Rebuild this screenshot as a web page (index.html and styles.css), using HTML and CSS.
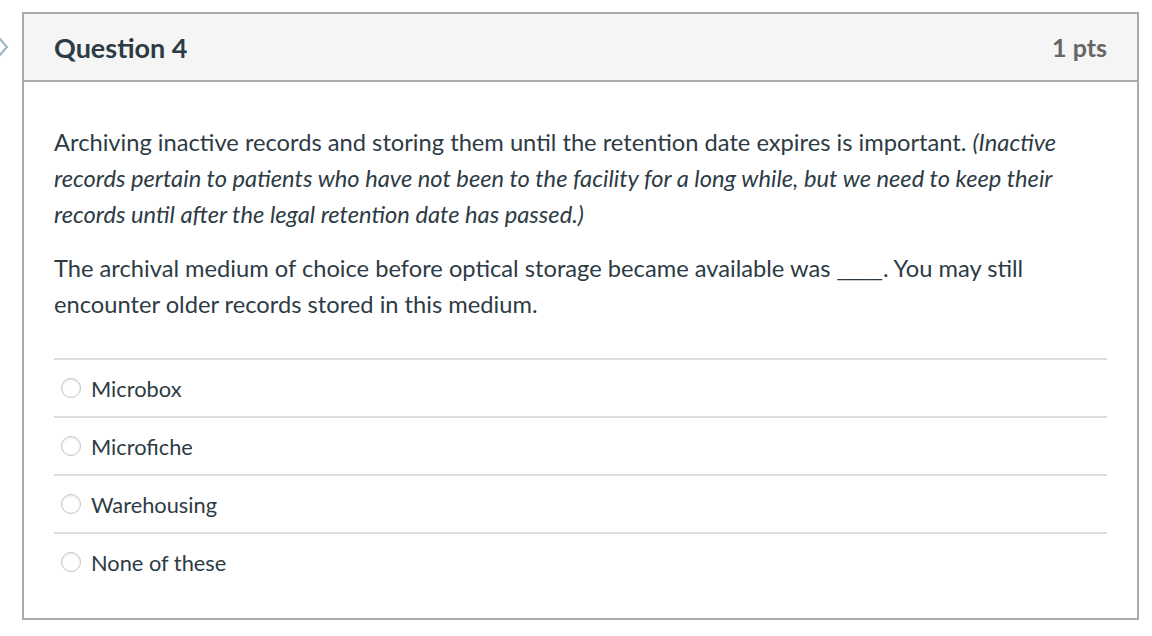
FILE: index.html
```html
<!DOCTYPE html>
<html>
<head>
<meta charset="utf-8">
<link rel="stylesheet" href="styles.css">
</head>
<body>
<div class="page">
  <div class="nav-arrow">
    <svg width="12" height="24" viewBox="0 0 12 24"><path d="M1 3 L9 12 L1 21" fill="none" stroke="#9db3c4" stroke-width="2"/></svg>
  </div>
  <div class="card">
    <div class="header">
      <span class="title">Question 4</span>
      <span class="pts">1 pts</span>
    </div>
    <div class="body">
      <p class="text">Archiving inactive records and storing them until the retention date expires is important. <em>(Inactive records pertain to patients who have not been to the facility for a long while, but we need to keep their records until after the legal retention date has passed.)</em></p>
      <p class="text">The archival medium of choice before optical storage became available was <span class="blank">_____</span>. You may still encounter older records stored in this medium.</p>
      <div class="answers">
        <label class="answer"><span class="radio"></span><span>Microbox</span></label>
        <label class="answer"><span class="radio"></span><span>Microfiche</span></label>
        <label class="answer"><span class="radio"></span><span>Warehousing</span></label>
        <label class="answer"><span class="radio"></span><span>None of these</span></label>
      </div>
    </div>
  </div>
</div>
</body>
</html>
```
FILE: styles.css
```css
html, body { margin: 0; padding: 0; background: #fff; }
body { font-family: Lato, "Liberation Sans", sans-serif; color: #2d3b45; }
.page { position: relative; padding: 12px 0 0 22px; width: 1117px; }
.nav-arrow { position: absolute; left: -2px; top: 35px; }
.card { border: 2px solid #aaaaaa; }
.header { display: flex; justify-content: space-between; align-items: center; background: #f5f5f5; border-bottom: 2px solid #aaaaaa; height: 66px; padding: 0 30px; }
.title { font-size: 27px; font-weight: 700; color: #2d3b45; }
.pts { font-size: 25px; font-weight: 700; color: #666; }
.body { padding: 42px 30px 28px 30px; }
.text { margin: 0 0 18px 0; font-size: 23.7px; line-height: 36px; }
.text em { font-style: italic; }
.blank { letter-spacing: -2px; margin-right: 2px; }
.answers { margin-top: 36px; }
.answer { display: flex; align-items: center; gap: 10px; height: 56px; border-top: 2px solid #dddddd; padding-left: 7px; font-size: 21.8px; }
.radio { width: 20px; height: 20px; border-radius: 50%; border: 1px solid #c4c4c4; box-sizing: border-box; box-shadow: inset 0 1px 2px rgba(0,0,0,0.1); background: #fff; }
```
